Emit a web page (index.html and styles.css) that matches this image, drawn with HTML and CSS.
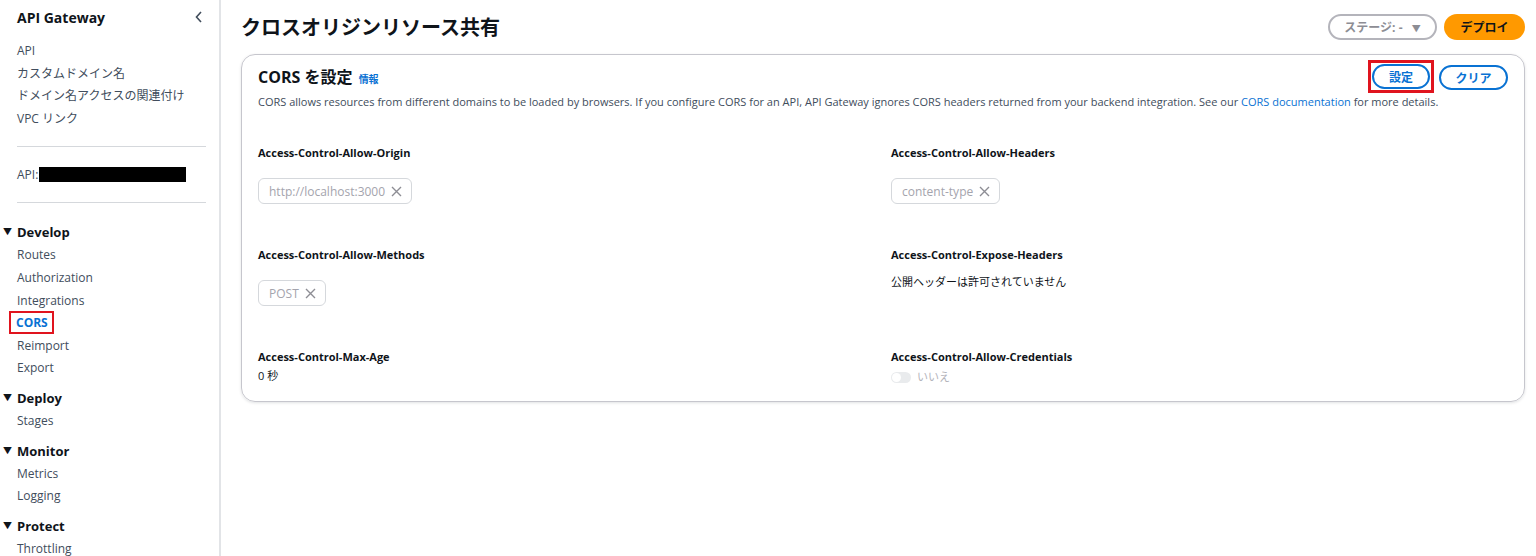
FILE: index.html
```html
<!DOCTYPE html>
<html lang="ja">
<head>
    <meta charset="UTF-8">
    <title>CORS - API Gateway</title>
    <link rel="stylesheet" href="styles.css">
</head>
<body>
    <div class="layout">
        <nav class="sidebar">
            <div class="side-head">
                <span class="side-title">API Gateway</span>
                <span class="side-close">
                    <svg width="10" height="12" viewBox="0 0 10 12"><path d="M7 1 L2.5 6 L7 11" fill="none" stroke="#414d5c" stroke-width="1.6"/></svg>
                </span>
            </div>
            <ul class="side-links">
                <li>API</li>
                <li>カスタムドメイン名</li>
                <li>ドメイン名アクセスの関連付け</li>
                <li>VPC リンク</li>
            </ul>
            <hr class="side-divider">
            <div class="api-row">API: <span class="redacted"></span></div>
            <hr class="side-divider">
            <div class="side-group">
                <div class="group-title"><span class="caret">▼</span>Develop</div>
                <ul class="group-links">
                    <li>Routes</li>
                    <li>Authorization</li>
                    <li>Integrations</li>
                    <li class="active"><span class="mark">CORS</span></li>
                    <li>Reimport</li>
                    <li>Export</li>
                </ul>
            </div>
            <div class="side-group">
                <div class="group-title"><span class="caret">▼</span>Deploy</div>
                <ul class="group-links">
                    <li>Stages</li>
                </ul>
            </div>
            <div class="side-group">
                <div class="group-title"><span class="caret">▼</span>Monitor</div>
                <ul class="group-links">
                    <li>Metrics</li>
                    <li>Logging</li>
                </ul>
            </div>
            <div class="side-group">
                <div class="group-title"><span class="caret">▼</span>Protect</div>
                <ul class="group-links">
                    <li>Throttling</li>
                </ul>
            </div>
        </nav>

        <main class="content">
            <div class="page-head">
                <h1>クロスオリジンリソース共有</h1>
                <div class="head-actions">
                    <button class="btn-stage">ステージ: - <span class="tri">▼</span></button>
                    <button class="btn-deploy">デプロイ</button>
                </div>
            </div>

            <section class="card">
                <div class="card-head">
                    <div class="card-text">
                        <h2>CORS を設定 <a class="info">情報</a></h2>
                        <p class="desc">CORS allows resources from different domains to be loaded by browsers. If you configure CORS for an API, API Gateway ignores CORS headers returned from your backend integration. See our <a>CORS documentation</a> for more details.</p>
                    </div>
                    <div class="card-actions">
                        <span class="mark-box"><button class="btn-outline">設定</button></span>
                        <button class="btn-outline">クリア</button>
                    </div>
                </div>

                <div class="fields">
                    <div class="field">
                        <div class="label">Access-Control-Allow-Origin</div>
                        <span class="token">http://localhost:3000 <svg class="x" width="11" height="11" viewBox="0 0 11 11"><path d="M1 1 L10 10 M10 1 L1 10" stroke="#8d8d94" stroke-width="1.4"/></svg></span>
                    </div>
                    <div class="field">
                        <div class="label">Access-Control-Allow-Headers</div>
                        <span class="token">content-type <svg class="x" width="11" height="11" viewBox="0 0 11 11"><path d="M1 1 L10 10 M10 1 L1 10" stroke="#8d8d94" stroke-width="1.4"/></svg></span>
                    </div>
                    <div class="field">
                        <div class="label">Access-Control-Allow-Methods</div>
                        <span class="token">POST <svg class="x" width="11" height="11" viewBox="0 0 11 11"><path d="M1 1 L10 10 M10 1 L1 10" stroke="#8d8d94" stroke-width="1.4"/></svg></span>
                    </div>
                    <div class="field">
                        <div class="label">Access-Control-Expose-Headers</div>
                        <div class="value">公開ヘッダーは許可されていません</div>
                    </div>
                    <div class="field short">
                        <div class="label">Access-Control-Max-Age</div>
                        <div class="value">0 秒</div>
                    </div>
                    <div class="field short">
                        <div class="label">Access-Control-Allow-Credentials</div>
                        <div class="toggle-row"><span class="toggle"></span>いいえ</div>
                    </div>
                </div>
            </section>
        </main>
    </div>
</body>
</html>
```

FILE: styles.css
```css
body{
    margin: 0;
    font-family: "Open Sans", "Noto Sans CJK JP", sans-serif;
    color: #0f141a;
    background: #fff;
    overflow: hidden;
}
ul{
    list-style: none;
    margin: 0;
    padding: 0;
}
.layout{
    display: flex;
    height: 556px;
}

/* sidebar */
.sidebar{
    width: 219px;
    flex-shrink: 0;
    border-right: 2px solid #e2e4e7;
    padding-top: 7px;
}
.side-head{
    display: flex;
    justify-content: space-between;
    align-items: center;
    padding: 0 17px;
    height: 20px;
}
.side-title{
    font-size: 14px;
    font-weight: 700;
}
.side-close{
    display: flex;
    margin-right: -2px;
}
.side-links{
    padding: 13px 17px 0;
}
.side-links li, .group-links li{
    font-size: 12px;
    color: #414d5c;
    line-height: 22.6px;
}
.side-divider{
    border: 0;
    border-top: 1px solid #d5d8dc;
    margin: 16px 13px 0 17px;
}
.api-row{
    font-size: 12px;
    color: #414d5c;
    padding: 19px 17px 4px;
    display: flex;
    align-items: center;
    height: 16px;
}
.redacted{
    display: inline-block;
    width: 147px;
    height: 15px;
    background: #000;
    margin-left: 1px;
}
.side-divider + .side-group{
    margin-top: 18px;
}
.side-group{
    margin-top: 7px;
}
.group-title{
    font-size: 13px;
    font-weight: 700;
    line-height: 22px;
    display: flex;
    align-items: center;
    margin-bottom: 1px;
}
.caret{
    font-size: 9px;
    width: 17px;
    padding-left: 3px;
    box-sizing: border-box;
}
.group-links{
    padding-left: 17px;
}
.group-links li.active{
    color: #0972d3;
    font-weight: 700;
}
.mark{
    outline: 2px solid #e0141e;
    padding: 1px 4px 1px 5px;
    margin-left: -6px;
}

/* main */
.content{
    flex: 1;
    min-width: 0;
    padding: 0 11px 0 20px;
}
.page-head{
    display: flex;
    justify-content: space-between;
    align-items: center;
    height: 54px;
}
h1{
    font-size: 20px;
    font-weight: 700;
    margin: 0;
    margin-top: -2px;
}
.head-actions{
    display: flex;
    gap: 7px;
    margin-top: -1px;
}
button{
    font-family: inherit;
    cursor: pointer;
    white-space: nowrap;
}
.btn-stage{
    height: 26px;
    width: 109px;
    border: 2px solid #b4b4bb;
    border-radius: 14px;
    background: #fff;
    color: #8d8d94;
    font-size: 12px;
    font-weight: 700;
    padding: 0;
}
.tri{
    font-size: 9px;
    margin-left: 6px;
}
.btn-deploy{
    height: 26px;
    width: 81px;
    border: 0;
    border-radius: 14px;
    background: #ff9900;
    color: #0f141a;
    font-size: 12px;
    font-weight: 700;
    padding: 0;
}

.card{
    border: 1px solid #c6c6cd;
    border-radius: 14px;
    box-shadow: 0 1px 3px rgba(0, 28, 36, 0.12);
    padding: 9px 16px 0;
    height: 337px;
}
.card-head{
    display: flex;
    justify-content: space-between;
}
.card-text{
    flex: 1;
    min-width: 0;
}
h2{
    font-size: 16px;
    font-weight: 700;
    margin: 0;
    line-height: 26px;
}
.info{
    font-size: 10px;
    color: #0972d3;
    font-weight: 700;
    margin-left: 2px;
}
.desc{
    margin: 2px 0 0;
    font-size: 11px;
    color: #414d5c;
    line-height: 16px;
    white-space: nowrap;
}
.desc a{
    color: #0972d3;
}
.card-actions{
    display: flex;
    align-items: flex-start;
    gap: 9px;
    margin-top: 1px;
}
.mark-box{
    outline: 3px solid #e0141e;
    outline-offset: 1px;
    display: flex;
    margin-top: -1px;
}
.btn-outline{
    height: 25px;
    border: 2px solid #0972d3;
    border-radius: 14px;
    background: #fff;
    color: #0972d3;
    font-size: 12px;
    font-weight: 700;
    padding: 0;
}
.mark-box .btn-outline{
    width: 58px;
}
.card-actions > .btn-outline{
    width: 69px;
}

.fields{
    display: grid;
    grid-template-columns: 633px 1fr;
    margin-top: 35px;
}
.field{
    height: 102px;
}
.field.short{
    height: auto;
}
.label{
    font-size: 11px;
    font-weight: 700;
    line-height: 16px;
}
.token{
    display: inline-flex;
    align-items: center;
    margin-top: 17px;
    height: 24px;
    border: 1px solid #d5d8dc;
    border-radius: 6px;
    padding: 0 9px 0 10px;
    font-size: 12px;
    color: #a4a4ad;
}
.x{
    margin-left: 6px;
}
.value{
    font-size: 11px;
    color: #0f141a;
    margin-top: 11px;
    line-height: 16px;
}
.field.short .value{
    margin-top: 3px;
}
.toggle-row{
    display: flex;
    align-items: center;
    font-size: 11px;
    color: #b4b4bb;
    margin-top: 4px;
    line-height: 16px;
}
.toggle{
    width: 20px;
    height: 11px;
    border-radius: 6px;
    background: #e9ebed;
    position: relative;
    margin-right: 6px;
}
.toggle::after{
    content: "";
    position: absolute;
    left: 1px;
    top: 1px;
    width: 9px;
    height: 9px;
    border-radius: 50%;
    background: #fff;
}
```
